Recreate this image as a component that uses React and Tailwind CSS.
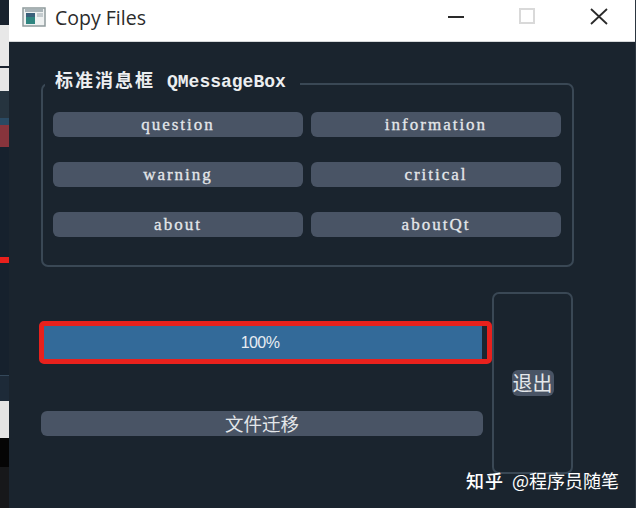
import React from 'react';

const mono = "font-['Liberation_Mono','Noto_Sans_CJK_SC',monospace]";
const serif = "font-['Liberation_Serif',serif]";
const cjk = "font-['Noto_Sans_CJK_SC',sans-serif]";

const boxes = ['question', 'information', 'warning', 'critical', 'about', 'aboutQt'];

const strip = [
  ['h-[25px]', 'bg-[#18222e]'],
  ['h-[41px]', 'bg-[#e8e8e8]'],
  ['h-[2px]', 'bg-[#1b2430]'],
  ['h-[23px]', 'bg-[#e6e6e6]'],
  ['h-[27px]', 'bg-[#26343f]'],
  ['h-[7px]', 'bg-[#2a4a63]'],
  ['h-[22px]', 'bg-[#87343c]'],
  ['h-[110px]', 'bg-[#16212d]'],
  ['h-[6px]', 'bg-[#e8201c]'],
  ['h-[112px]', 'bg-[#16212d]'],
  ['h-[1px]', 'bg-[#34485a]'],
  ['h-[25px]', 'bg-[#1d2a38]'],
  ['h-[37px]', 'bg-[#e4e4e4]'],
  ['h-[29px]', 'bg-[#050505]'],
  ['flex-1', 'bg-[#17181a]'],
];

const WindowIcon = () => (
  <svg width="24" height="20" viewBox="0 0 24 20">
    <rect x="1" y="1" width="22" height="18" fill="#eef1f1" stroke="#8f9a9c" strokeWidth="1.5" />
    <rect x="3" y="2" width="18" height="3" fill="#a9b4b8" />
    <rect x="4" y="6" width="9" height="11" fill="#2f8580" />
    <rect x="4" y="6" width="9" height="4" fill="#39607a" />
    <rect x="15" y="6" width="6" height="4" fill="#c3cbce" />
  </svg>
);

const App = () => {
  return (
    <div className="w-[636px] h-[508px] relative flex overflow-hidden bg-[#1a242e]">
      <div className="w-[9px] flex flex-col shrink-0">
        {strip.map(([h, bg], i) => (
          <div key={i} className={`${h} ${bg}`}></div>
        ))}
      </div>

      <div className="flex-1 flex flex-col">
        <div className="h-[42px] bg-white flex items-center shrink-0 border-b border-[#d5d8da]">
          <div className="ml-[13px] mb-[7px]"><WindowIcon /></div>
          <span className="w-[105px] ml-[9px] mb-[5px] text-[19.5px] text-[#2b2b2b] font-['Open_Sans',sans-serif]">Copy Files</span>
          <svg width="16" height="4" viewBox="0 0 16 4" className="ml-[288px] mb-[7px]">
            <rect x="0" y="1" width="16" height="2" fill="#2a2a2a" />
          </svg>
          <svg width="16" height="16" viewBox="0 0 16 16" className="ml-[55px] mb-[9px]">
            <rect x="1" y="1" width="14" height="14" fill="none" stroke="#d9d9d9" strokeWidth="2" />
          </svg>
          <svg width="18" height="17" viewBox="0 0 18 17" className="ml-[55px] mb-[9px]">
            <path d="M1 1 L17 16 M17 1 L1 16" stroke="#2a2a2a" strokeWidth="1.8" fill="none" />
          </svg>
        </div>

        <div className="flex-1 pl-[30px] pt-[41px] bg-[#1a242e]">
          <div className="relative ml-[2px] w-[533px] h-[184px] border-2 border-[#3a4855] rounded-[7px] pl-[10px] pt-[27px]">
            <div className="absolute -top-[19px] left-[2px] pl-[10px] pr-[12px] bg-[#1a242e] flex items-baseline text-[#eceef0] font-bold">
              <span className={`${cjk} text-[18px] tracking-[2px]`}>标准消息框</span>
              <span className={`${mono} text-[18px] ml-[12px] mr-[2px]`}>QMessageBox</span>
            </div>
            <div className="grid grid-cols-[250px_250px] gap-x-[8px] gap-y-[25px]">
              {boxes.map((b) => (
                <div key={b} className={`${serif} h-[25px] rounded-[6px] bg-[#495465] flex items-center justify-center text-[17px] tracking-[2px] [-webkit-text-stroke:0.3px_#e4e7ea] text-[#e4e7ea]`}>
                  {b}
                </div>
              ))}
            </div>
          </div>

          <div className="flex mt-[25px]">
            <div className="w-[453px] pt-[29px]">
              <div className="h-[43px] border-[5px] border-[#e8211d] rounded-[5px] pr-[5px] bg-[#1c2630]">
                <div className="pr-[6px] h-full bg-[#336a99] flex items-center justify-center text-[16px] tracking-[-0.6px] text-[#e8edf2] font-['Liberation_Sans',sans-serif]">
                  100%
                </div>
              </div>
              <div className={`${cjk} mt-[47px] ml-[2px] w-[442px] h-[25px] rounded-[6px] bg-[#495465] flex items-center justify-center text-[18.5px] text-[#e4e7ea]`}>
                文件迁移
              </div>
            </div>
            <div className="w-[81px] h-[182px] border-2 border-[#3a4855] rounded-[7px] flex items-center justify-center">
              <span className={`${cjk} h-[26px] px-[1px] rounded-[6px] bg-[#495465] flex items-center text-[20px] text-[#e4e7ea]`}>退出</span>
            </div>
          </div>
        </div>
      </div>

      <div className="w-px bg-[#2c3640] shrink-0"></div>

      <div className={`${cjk} absolute left-[466px] top-[467px] flex items-center text-white text-[18px]`}>
        <span className="font-medium tracking-[1px]">知乎</span>
        <span className="ml-[8px]">@程序员随笔</span>
      </div>
    </div>
  );
};

export default App;
